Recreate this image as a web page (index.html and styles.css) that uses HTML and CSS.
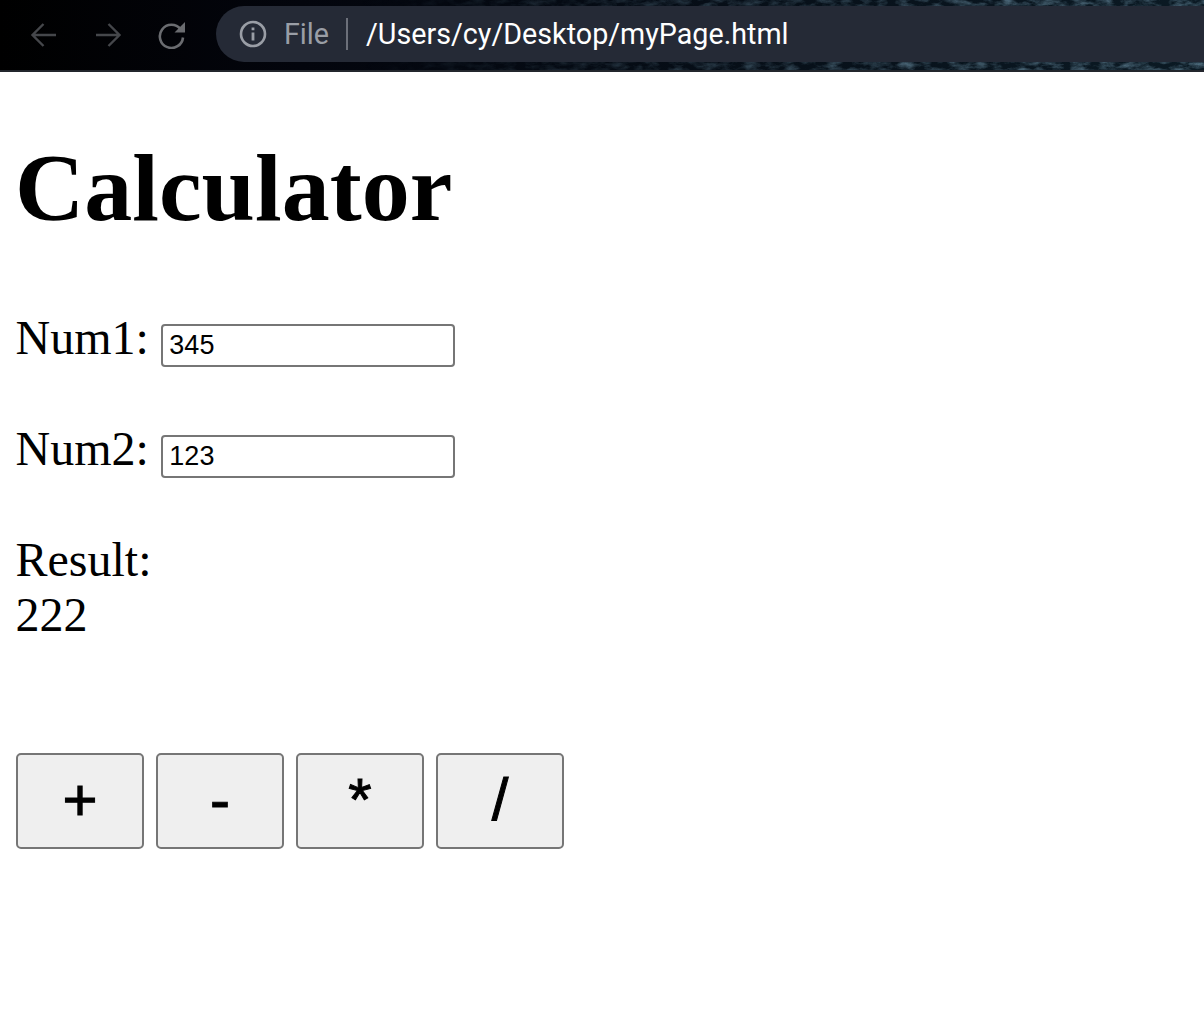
FILE: index.html
```html
<!DOCTYPE html>
<html lang="en">
<head>
  <meta charset="UTF-8">
  <title>Calculator</title>
  <link rel="stylesheet" href="styles.css">
</head>
<body>

  <!-- Browser toolbar -->
  <header class="toolbar">
    <svg class="toolbar-texture" width="1204" height="70" aria-hidden="true">
      <defs>
        <filter id="grain">
          <feTurbulence type="fractalNoise" baseFrequency="0.07 0.16" numOctaves="5" seed="11"/>
          <feColorMatrix values="0 0 0 0 0.18  0 0 0 0 0.33  0 0 0 0 0.44  1.6 0 0 0 -0.62"/>
        </filter>
        <linearGradient id="fade">
          <stop offset="0.3" stop-color="#000"/>
          <stop offset="0.6" stop-color="#777"/>
          <stop offset="1" stop-color="#fff"/>
        </linearGradient>
        <mask id="fade-mask">
          <rect width="1204" height="70" fill="url(#fade)"/>
        </mask>
      </defs>
      <rect width="1204" height="70" filter="url(#grain)" mask="url(#fade-mask)"/>
    </svg>
    <svg class="nav-icon" width="28" height="28" viewBox="0 0 28 28">
      <path d="M26 14H3M13.5 3 2.5 14l11 11" fill="none" stroke="#45474b" stroke-width="2.4"/>
    </svg>
    <svg class="nav-icon" width="28" height="28" viewBox="0 0 28 28">
      <path d="M2 14h23M14.5 3l11 11-11 11" fill="none" stroke="#45474b" stroke-width="2.4"/>
    </svg>
    <svg class="nav-icon" width="28" height="28" viewBox="0 0 28 28">
      <path d="M22.6 8.2A11.6 11.6 0 1 0 25 16.5" fill="none" stroke="#6a6c70" stroke-width="2.6"/>
      <path d="M27 1v10.5H16.5z" fill="#6a6c70"/>
    </svg>
    <div class="omnibox">
      <svg class="info-icon" width="28" height="28" viewBox="0 0 28 28">
        <circle cx="14" cy="14" r="12" fill="none" stroke="#9a9ea6" stroke-width="2.6"/>
        <path d="M12.6 12.4h2.8v8h-2.8zM12.6 7.6h2.8v2.6h-2.8z" fill="#9a9ea6"/>
      </svg>
      <span class="scheme">File</span>
      <span class="divider"></span>
      <span class="url">/Users/cy/Desktop/myPage.html</span>
    </div>
  </header>

  <!-- Page content -->
  <main>
    <h1>Calculator</h1>
    <div class="field">Num1: <input type="text" value="345"></div>
    <div class="field">Num2: <input type="text" value="123"></div>
    <div class="result">Result:<br>222</div>
    <div class="buttons">
      <button>+</button>
      <button>-</button>
      <button>*</button>
      <button>/</button>
    </div>
  </main>

</body>
</html>
```

FILE: styles.css
```css
* {
  box-sizing: border-box;
}

body {
  margin: 0;
  background: #fff;
  color: #000;
  font-family: "Liberation Serif", serif;
  font-size: 48px;
  overflow: hidden;
}

/* Browser toolbar */
.toolbar {
  position: relative;
  display: flex;
  align-items: flex-start;
  height: 72px;
  padding: 6px 0 0 30px;
  background: linear-gradient(90deg, #000 0%, #03050d 25%, #050b14 50%, #0b1a24 100%);
  border-bottom: 2px solid #23262d;
  overflow: hidden;
}

.toolbar-texture {
  position: absolute;
  top: 0;
  left: 0;
}

.nav-icon {
  position: relative;
  flex: none;
  margin: 15px 36px 0 0;
}

.omnibox {
  position: relative;
  display: flex;
  align-items: center;
  flex: 1;
  height: 56px;
  margin-left: -6px;
  margin-right: -30px;
  padding-left: 23px;
  background: #252a36;
  border-radius: 28px 0 0 28px;
  font-family: "Roboto", sans-serif;
  font-size: 28.7px;
}

.info-icon {
  flex: none;
}

.scheme {
  margin-left: 17px;
  color: #9a9ea6;
}

.divider {
  width: 2px;
  height: 32px;
  margin: 0 18px 0 17px;
  background: #6c707a;
}

.url {
  color: #fff;
}

/* Page content */
main {
  padding: 0 16px 0 15.5px;
}

h1 {
  margin: 60px 0 67px -0.5px;
  font-size: 96px;
  font-weight: bold;
}

.field {
  margin-bottom: 54px;
}

.field input {
  width: 294px;
  height: 43px;
  margin-left: 0.5px;
  padding: 2px 6px;
  border: 2px solid #767676;
  border-radius: 4px;
  font-family: "Liberation Sans", sans-serif;
  font-size: 27px;
}

.result {
  margin-bottom: 111px;
}

.buttons {
  padding-left: 0.5px;
}

.buttons button {
  width: 128px;
  height: 96px;
  padding: 0 0 3px;
  background: #efefef;
  border: 2px solid #767676;
  border-radius: 5px;
  color: #000;
  font-family: "Liberation Sans", sans-serif;
  font-size: 60px;
  -webkit-text-stroke: 1px #000;
}
```
